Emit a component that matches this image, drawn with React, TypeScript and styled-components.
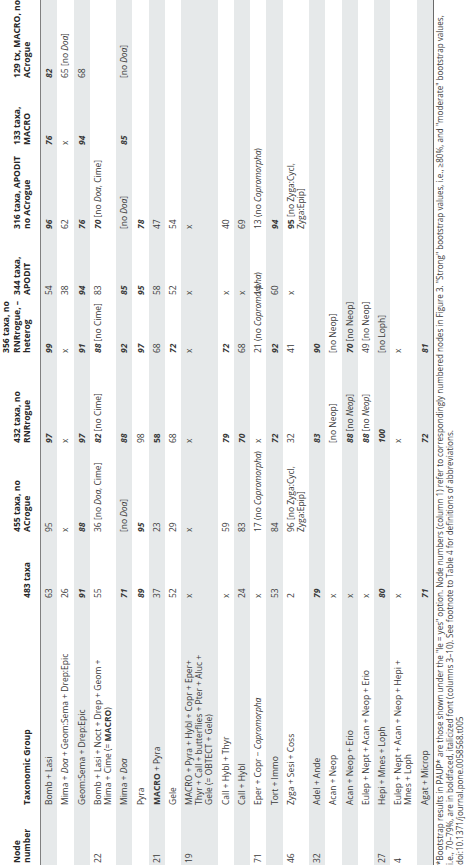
import React from 'react';
import styled, { createGlobalStyle } from 'styled-components';

const GlobalStyle = createGlobalStyle`
  html, body {
    margin: 0;
    padding: 0;
    background: #fff;
  }
  body {
    overflow: hidden;
  }
`;

const Viewport = styled.div`
  width: 474px;
  height: 865px;
  overflow: hidden;
  background: #fff;
`;

// the table is typeset landscape, then turned onto the portrait page
const Sheet = styled.div`
  width: 865px;
  height: 474px;
  transform-origin: 0 0;
  transform: translateY(865px) rotate(-90deg);
  font-family: 'Open Sans', 'Noto Sans', sans-serif;
  color: #393939;
`;

const COLS = '60px 207px 66px 89px 90px 58px 66px 84px 67px 1fr';

const HeadRow = styled.div`
  display: grid;
  grid-template-columns: ${COLS};
  align-items: end;
  box-sizing: border-box;
  height: 41px;
  padding-bottom: 7.5px;
  border-bottom: 1.5px solid #808080;
`;

const HeadCell = styled.div<{ $pad?: number }>`
  font-size: 8.6px;
  font-weight: 700;
  line-height: 10.5px;
  color: #262626;
  white-space: nowrap;
  padding-left: ${(p) => p.$pad ?? 0}px;
`;

const Body = styled.div`
  border-bottom: 1px solid #6a6a6a;
`;

const Row = styled.div<{ $shade: boolean }>`
  display: grid;
  grid-template-columns: ${COLS};
  align-items: start;
  padding: 3.15px 0;
  font-size: 8.5px;
  line-height: 10px;
  background: ${(p) => (p.$shade ? '#e6e9ea' : '#fff')};
`;

const Cell = styled.div<{ $pad?: number }>`
  white-space: nowrap;
  padding-left: ${(p) => p.$pad ?? 0}px;
`;

const Strong = styled.span`
  font-style: italic;
  font-weight: 700;
`;

const Bold = styled.span`
  font-weight: 700;
`;

const It = styled.span`
  font-style: italic;
  letter-spacing: -0.15px;
`;

const Footnote = styled.div`
  padding-top: 1.5px;
  font-size: 8.1px;
  line-height: 10px;
  color: #3a3a3a;
  white-space: nowrap;
`;

type TableRow = {
  node?: string;
  group: React.ReactNode;
  values: React.ReactNode[];
};

const headers = [
  <>Node<br />number</>,
  <>Taxonomic Group</>,
  <>483 taxa</>,
  <>455 taxa, no<br />ACrogue</>,
  <>432 taxa, no<br />RNRrogue</>,
  <>356 taxa, no<br />RNRrogue, –<br />heterog</>,
  <>344 taxa,<br />APODIT</>,
  <>316 taxa, APODIT<br />no ACrogue</>,
  <>133 taxa,<br />MACRO</>,
  <>129 tx, MACRO, no<br />ACrogue</>,
];

const noDoa = <>[no <It>Doa</It>]</>;
const noCopro = (n: string) => <>{n} (no <It>Copromorpha</It>)</>;

const rows: TableRow[] = [
  {
    group: 'Bomb + Lasi',
    values: ['63', '95', <Strong>97</Strong>, <Strong>99</Strong>, '54', <Strong>96</Strong>, <Strong>76</Strong>, <Strong>82</Strong>],
  },
  {
    group: <>Mima + <It>Doa</It> + Geom:Sema + Drep:Epic</>,
    values: ['26', 'x', 'x', 'x', '38', '62', 'x', <>65 {noDoa}</>],
  },
  {
    group: 'Geom:Sema + Drep:Epic',
    values: [<Strong>91</Strong>, <Strong>88</Strong>, <Strong>97</Strong>, <Strong>91</Strong>, <Strong>94</Strong>, <Strong>76</Strong>, <Strong>94</Strong>, '68'],
  },
  {
    node: '22',
    group: <>Bomb + Lasi + Noct + Drep + Geom +<br />Mima + Cime (= <Bold>MACRO</Bold>)</>,
    values: [
      '55',
      <>36 [no <It>Doa</It>, Cime]</>,
      <><Strong>82</Strong> [no Cime]</>,
      <><Strong>88</Strong> [no Cime]</>,
      '83',
      <><Strong>70</Strong> [no <It>Doa</It>, Cime]</>,
    ],
  },
  {
    group: <>Mima + <It>Doa</It></>,
    values: [<Strong>71</Strong>, noDoa, <Strong>88</Strong>, <Strong>92</Strong>, <Strong>85</Strong>, noDoa, <Strong>85</Strong>, noDoa],
  },
  {
    group: 'Pyra',
    values: [<Strong>89</Strong>, <Strong>95</Strong>, '98', <Strong>97</Strong>, <Strong>95</Strong>, <Strong>78</Strong>],
  },
  {
    node: '21',
    group: <><Bold>MACRO</Bold> + Pyra</>,
    values: ['37', '23', <Bold>58</Bold>, '68', '58', '47'],
  },
  {
    group: 'Gele',
    values: ['52', '29', '68', <Strong>72</Strong>, '52', '54'],
  },
  {
    node: '19',
    group: (
      <>
        MACRO + Pyra + Hybl + Copr + Eper+<br />
        Thyr + Call + butterflies + Pter + Aluc +<br />
        Gele (= OBTECT + Gele)
      </>
    ),
    values: ['x', 'x', 'x', 'x', 'x', 'x'],
  },
  {
    group: 'Call + Hybl + Thyr',
    values: ['x', '59', <Strong>79</Strong>, <Strong>72</Strong>, 'x', '40'],
  },
  {
    group: 'Call + Hybl',
    values: ['24', '83', <Strong>70</Strong>, '68', 'x', '69'],
  },
  {
    node: '71',
    group: <>Eper + Copr − <It>Copromorpha</It></>,
    values: ['x', noCopro('17'), 'x', noCopro('21'), '14', noCopro('13')],
  },
  {
    group: 'Tort + Immo',
    values: ['53', '84', <Strong>72</Strong>, <Strong>92</Strong>, '60', <Strong>94</Strong>],
  },
  {
    node: '46',
    group: 'Zyga + Sesi + Coss',
    values: [
      '2',
      <>96 [no Zyga:Cycl,<br />Zyga:Epip]</>,
      '32',
      '41',
      'x',
      <><Bold>95</Bold> [no Zyga:Cycl,<br />Zyga:Epip]</>,
    ],
  },
  {
    node: '32',
    group: 'Adel + Ande',
    values: [<Strong>79</Strong>, '', <Strong>83</Strong>, <Strong>90</Strong>],
  },
  {
    group: 'Acan + Neop',
    values: ['x', '', '[no Neop]', '[no Neop]'],
  },
  {
    group: 'Acan + Neop + Erio',
    values: ['x', '', <><Strong>88</Strong> [no <It>Neop</It>]</>, <><Strong>70</Strong> [no Neop]</>],
  },
  {
    group: 'Eulep + Nept + Acan + Neop + Erio',
    values: ['x', '', <><Strong>88</Strong> [no <It>Neop</It>]</>, '49 [no Neop]'],
  },
  {
    node: '27',
    group: 'Hepi + Mnes + Loph',
    values: [<Strong>80</Strong>, '', <Strong>100</Strong>, '[no Loph]'],
  },
  {
    node: '4',
    group: <>Eulep + Nept + Acan + Neop + Hepi +<br />Mnes + Loph</>,
    values: ['x', '', 'x', 'x'],
  },
  {
    group: 'Agat + Microp',
    values: [<Strong>71</Strong>, '', <Strong>72</Strong>, <Strong>81</Strong>],
  },
];

export default function App() {
  return (
    <Viewport>
      <GlobalStyle />
      <Sheet>
        <HeadRow>
          {headers.map((h, i) => (
            <HeadCell key={i} $pad={i === 0 ? 2 : 0}>
              {h}
            </HeadCell>
          ))}
        </HeadRow>
        <Body>
          {rows.map((r, i) => (
            <Row key={i} $shade={i % 2 === 0}>
              <Cell $pad={2}>{r.node ?? ''}</Cell>
              <Cell>{r.group}</Cell>
              {Array.from({ length: 8 }, (_, c) => (
                <Cell key={c}>{r.values[c] ?? ''}</Cell>
              ))}
            </Row>
          ))}
        </Body>
        <Footnote>
          *Bootstrap results in PAUP* are those shown under the "le = yes" option. Node numbers (column 1) refer to
          correspondingly numbered nodes in Figure 3. "Strong" bootstrap values, i.e., ≥80%, and "moderate" bootstrap
          values,
          <br />
          i.e., 70–79%, are in boldfaced, italicized font (columns 3–10). See footnote to Table 4 for definitions of
          abbreviations.
          <br />
          doi:10.1371/journal.pone.0058568.t005
        </Footnote>
      </Sheet>
    </Viewport>
  );
}
